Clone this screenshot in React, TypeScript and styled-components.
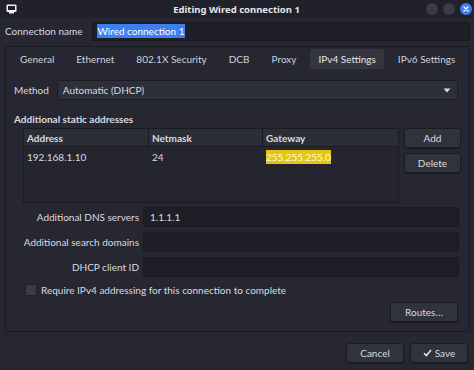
import React from "react";
import styled, { createGlobalStyle } from "styled-components";

const Global = createGlobalStyle`
  html, body {
    margin: 0;
    padding: 0;
    background: #262731;
  }
  body {
    font-family: Lato, "Noto Sans", sans-serif;
    font-size: 10px;
    color: #d9dbe0;
    white-space: nowrap;
  }
`;

const Window = styled.div`
  width: 474px;
  height: 370px;
  display: flex;
  flex-direction: column;
  background: #262731;
  overflow: hidden;
`;

const TitleBar = styled.div`
  height: 18px;
  display: flex;
  align-items: center;
  padding: 0 2px 0 6px;
  background: #20212a;
`;

const TitleText = styled.div`
  flex: 1;
  text-align: center;
  font-family: "Noto Sans", sans-serif;
  font-size: 9.5px;
  font-weight: 700;
  color: #e6e7ea;
  padding-left: 30px;
`;

const WinButtons = styled.div`
  display: flex;
  gap: 5px;
  align-items: center;
`;

const WinDot = styled.div<{ $close?: boolean }>`
  width: 12px;
  height: 12px;
  border-radius: 50%;
  background: ${(p) => (p.$close ? "#3d7ff0" : "#3b3c45")};
  display: flex;
  align-items: center;
  justify-content: center;
`;

const NameRow = styled.div`
  display: flex;
  align-items: center;
  height: 20px;
  margin-top: 3px;
  padding: 0 4px 0 5px;
  gap: 9px;
`;

const Entry = styled.div`
  flex: 1;
  height: 19px;
  box-sizing: border-box;
  background: #1d1e26;
  border: 1px solid #18191f;
  border-radius: 2px;
  display: flex;
  align-items: center;
  padding: 0 4px;
  color: #d9dbe0;
`;

const Selected = styled.span`
  background: #3d7ff0;
  color: #ffffff;
  padding: 1px 1px;
`;

const Notebook = styled.div`
  margin: 5px 4px 0 5px;
  height: 286px;
  box-sizing: border-box;
  border: 1px solid #1b1c23;
  display: flex;
  flex-direction: column;
`;

const Tabs = styled.div`
  display: flex;
  gap: 6px;
  padding: 2px 0 0 6px;
  height: 21px;
`;

const Tab = styled.div<{ $active?: boolean }>`
  padding: 0 8px;
  display: flex;
  align-items: center;
  height: 20px;
  border-radius: 2px;
  background: ${(p) => (p.$active ? "#34363f" : "transparent")};
  color: ${(p) => (p.$active ? "#e4e5e9" : "#cfd1d6")};
`;

const Page = styled.div`
  padding: 10px 10px 0 8px;
  display: flex;
  flex-direction: column;
`;

const MethodRow = styled.div`
  display: flex;
  align-items: center;
  gap: 8px;
  padding-right: 1px;
`;

const Combo = styled.div`
  flex: 1;
  height: 20px;
  box-sizing: border-box;
  background: #2d2f39;
  border: 1px solid #1c1d24;
  border-radius: 2px;
  display: flex;
  align-items: center;
  justify-content: space-between;
  padding: 0 6px 0 5px;
`;

const SectionTitle = styled.div`
  font-weight: 700;
  margin-top: 10px;
  height: 18px;
  display: flex;
  align-items: center;
`;

const TableRow = styled.div`
  display: flex;
  gap: 5px;
  padding-left: 9px;
`;

const Table = styled.div`
  width: 376px;
  height: 75px;
  box-sizing: border-box;
  border: 1px solid #1a1b22;
  background: #24252f;
`;

const Head = styled.div`
  display: flex;
  height: 17px;
  background: #2b2d37;
  border-bottom: 1px solid #1a1b22;
`;

const HeadCell = styled.div<{ $w: number }>`
  width: ${(p) => p.$w}px;
  box-sizing: border-box;
  padding-left: 3px;
  font-weight: 700;
  display: flex;
  align-items: center;
  border-right: 1px solid #1a1b22;
  &:last-child {
    border-right: none;
  }
`;

const BodyRow = styled.div`
  display: flex;
  height: 19px;
`;

const Cell = styled.div<{ $w: number }>`
  width: ${(p) => p.$w}px;
  box-sizing: border-box;
  padding-left: 3px;
  display: flex;
  align-items: center;
`;

const Highlight = styled.span`
  background: #e5c60f;
  color: #fffbe0;
  padding: 1px 0;
`;

const SideButtons = styled.div`
  display: flex;
  flex-direction: column;
  gap: 5px;
`;

const Button = styled.div<{ $w: number }>`
  width: ${(p) => p.$w}px;
  height: 20px;
  box-sizing: border-box;
  background: #30323c;
  border: 1px solid #1b1c22;
  border-radius: 3px;
  display: flex;
  align-items: center;
  justify-content: center;
  gap: 3px;
  color: #d9dbe0;
  box-shadow: 0 1px 1px rgba(0, 0, 0, 0.3);
`;

const Form = styled.div`
  display: grid;
  grid-template-columns: 125px 1fr;
  column-gap: 4px;
  row-gap: 5px;
  margin-top: 4px;
`;

const FormLabel = styled.div`
  height: 20px;
  display: flex;
  align-items: center;
  justify-content: flex-end;
`;

const Field = styled.div`
  height: 20px;
  box-sizing: border-box;
  background: #1d1e26;
  border: 1px solid #1a1b21;
  border-radius: 2px;
  display: flex;
  align-items: center;
  padding: 0 6px;
`;

const CheckRow = styled.div`
  display: flex;
  align-items: center;
  gap: 4px;
  margin: 6px 0 0 11px;
  height: 14px;
`;

const Check = styled.div`
  width: 10px;
  height: 10px;
  background: #3a3c46;
  border: 1px solid #202129;
  border-radius: 2px;
`;

const RoutesRow = styled.div`
  display: flex;
  justify-content: flex-end;
  margin-top: 5px;
  padding-right: 1px;
`;

const Footer = styled.div`
  display: flex;
  justify-content: flex-end;
  gap: 6px;
  padding: 11px 6px 0 0;
`;

const cols = [125, 114, 135];

export default function App() {
  return (
    <Window>
      <Global />
      <TitleBar>
        <svg width="11" height="10" viewBox="0 0 11 10">
          <rect x="0.5" y="0.5" width="10" height="7.5" rx="1" fill="#f2f2f2" />
          <rect x="2" y="2" width="7" height="4" fill="#20212a" />
          <rect x="3" y="8" width="5" height="1.5" fill="#f2f2f2" />
        </svg>
        <TitleText>Editing Wired connection 1</TitleText>
        <WinButtons>
          <WinDot />
          <WinDot />
          <WinDot $close>
            <svg width="6" height="6" viewBox="0 0 6 6">
              <path d="M1 1L5 5M5 1L1 5" stroke="#fff" strokeWidth="1.4" strokeLinecap="round" />
            </svg>
          </WinDot>
        </WinButtons>
      </TitleBar>

      <NameRow>
        <span>Connection name</span>
        <Entry>
          <Selected>Wired connection 1</Selected>
        </Entry>
      </NameRow>

      <Notebook>
        <Tabs>
          <Tab>General</Tab>
          <Tab>Ethernet</Tab>
          <Tab>802.1X Security</Tab>
          <Tab>DCB</Tab>
          <Tab>Proxy</Tab>
          <Tab $active>IPv4 Settings</Tab>
          <Tab>IPv6 Settings</Tab>
        </Tabs>

        <Page>
          <MethodRow>
            <span>Method</span>
            <Combo>
              <span>Automatic (DHCP)</span>
              <svg width="8" height="5" viewBox="0 0 8 5">
                <path d="M0.5 0.5H7.5L4 4.5Z" fill="#e0e1e5" />
              </svg>
            </Combo>
          </MethodRow>

          <SectionTitle>Additional static addresses</SectionTitle>

          <TableRow>
            <Table>
              <Head>
                <HeadCell $w={cols[0]}>Address</HeadCell>
                <HeadCell $w={cols[1]}>Netmask</HeadCell>
                <HeadCell $w={cols[2]}>Gateway</HeadCell>
              </Head>
              <BodyRow>
                <Cell $w={cols[0]}>192.168.1.10</Cell>
                <Cell $w={cols[1]}>24</Cell>
                <Cell $w={cols[2]}>
                  <Highlight>255.255.255.0</Highlight>
                </Cell>
              </BodyRow>
            </Table>
            <SideButtons>
              <Button $w={57}>Add</Button>
              <Button $w={57}>Delete</Button>
            </SideButtons>
          </TableRow>

          <Form>
            <FormLabel>Additional DNS servers</FormLabel>
            <Field>1.1.1.1</Field>
            <FormLabel>Additional search domains</FormLabel>
            <Field />
            <FormLabel>DHCP client ID</FormLabel>
            <Field />
          </Form>

          <CheckRow>
            <Check />
            <span>Require IPv4 addressing for this connection to complete</span>
          </CheckRow>

          <RoutesRow>
            <Button $w={68}>Routes…</Button>
          </RoutesRow>
        </Page>
      </Notebook>

      <Footer>
        <Button $w={58}>Cancel</Button>
        <Button $w={58}>
          <svg width="9" height="8" viewBox="0 0 9 8">
            <path d="M1 4.2L3.4 6.6L8 1" stroke="#e6e7ea" strokeWidth="1.5" fill="none" />
          </svg>
          Save
        </Button>
      </Footer>
    </Window>
  );
}
